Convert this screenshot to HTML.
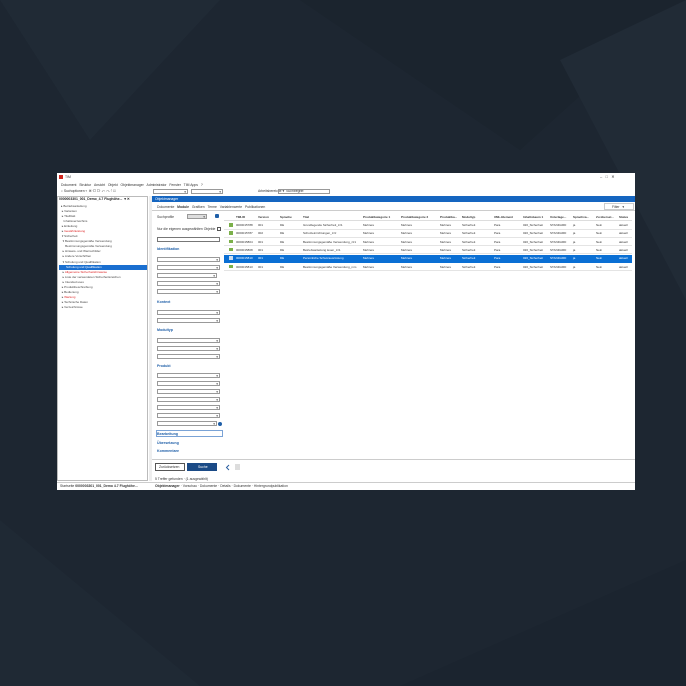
<!DOCTYPE html>
<html><head><meta charset="utf-8"><style>
*{margin:0;padding:0;box-sizing:border-box}
body{width:686px;height:686px;overflow:hidden;background:#1d2631;font-family:"Liberation Sans",sans-serif;position:relative}
.a{position:absolute}
.t{position:absolute;font-size:3.4px;color:#333;white-space:nowrap;line-height:4px}
.f{position:absolute;height:5px;border:0.5px solid #999;background:#fff}
.f::after{content:"▾";position:absolute;right:1px;top:-0.5px;font-size:3.5px;color:#555;line-height:5px}
.h{position:absolute;font-size:3.6px;color:#1f5fa8;font-weight:bold;white-space:nowrap}
</style></head><body>
<svg class="a" style="left:0;top:0" width="686" height="686">
<polygon points="0,0 220,0 90,140" fill="#202a35"/>
<polygon points="300,0 686,0 520,150" fill="#1b242e"/>
<polygon points="0,520 200,686 0,686" fill="#1f2934"/>
<polygon points="400,686 686,560 686,686" fill="#1b242f"/>
<polygon points="560,60 686,0 686,300" fill="#212b36"/>
</svg>
<div class="a" style="left:57px;top:173px;width:578px;height:317px;background:#fff"></div>
<div class="a" style="left:59px;top:175px;width:4px;height:4px;background:#d0261e"></div>
<div class="t" style="left:65px;top:175px">TIM</div>
<div class="t" style="left:600px;top:175px;font-size:4px">–&nbsp;&nbsp;&nbsp;□&nbsp;&nbsp;&nbsp;✕</div>
<div class="t" style="left:61px;top:183px">Dokument&nbsp;&nbsp;&nbsp;Struktur&nbsp;&nbsp;&nbsp;Ansicht&nbsp;&nbsp;&nbsp;Objekt&nbsp;&nbsp;&nbsp;Objektmanager&nbsp;&nbsp;&nbsp;Administrator&nbsp;&nbsp;&nbsp;Fenster&nbsp;&nbsp;&nbsp;TIM Apps&nbsp;&nbsp;&nbsp;?</div>
<div class="t" style="left:61px;top:189px">⌕ Suchoptionen ▾ &nbsp;▣ ⟲ ⟳ ↶ ↷ ⇡ ▤</div>
<div class="f" style="left:153px;top:189px;width:35px"></div>
<div class="f" style="left:191px;top:189px;width:32px"></div>
<div class="t" style="left:258px;top:189px">Arbeitsbereiche ▾ &nbsp;Suchbegriff:</div>
<div class="a" style="left:278px;top:189px;width:52px;height:5px;border:0.5px solid #999"></div>
<div class="a" style="left:57px;top:196px;width:91px;height:285px;border:0.5px solid #bbb"></div>
<div class="t" style="left:59px;top:197px;font-weight:bold;color:#222">0000003301_001_Demo_4.7 Flughöhe...&nbsp;&nbsp;▾ ✕</div>
<div class="a" style="left:59px;top:265px;width:88px;height:5px;background:#1a6fd0"></div>
<div class="t" style="left:61px;top:204px;font-size:3px;line-height:5.05px;color:#444">
▸ Betriebsanleitung<br>&nbsp;▸ Varianten<br>&nbsp;▸ Titelblatt<br>&nbsp;&nbsp;&nbsp;Inhaltsverzeichnis<br>&nbsp;▸ Einleitung<br>&nbsp;▸ <span style="color:#d22">Gewährleistung</span><br>&nbsp;▾ Sicherheit<br>&nbsp;&nbsp;▾ Bestimmungsgemäße Verwendung<br>&nbsp;&nbsp;&nbsp;&nbsp;&nbsp;Bestimmungsgemäße Verwendung<br>&nbsp;&nbsp;▸ Hinweis- und Warnschilder<br>&nbsp;&nbsp;▸ Andere Vorschriften<br>&nbsp;&nbsp;▾ Schulung und Qualifikation<br><span style="color:#fff">&nbsp;&nbsp;&nbsp;&nbsp;&nbsp;&nbsp;Schulung und Qualifikation</span><br>&nbsp;&nbsp;▸ <span style="color:#d22">Allgemeine Sicherheitshinweise</span><br>&nbsp;&nbsp;▸ Liste der verwendeten Sicherheitszeichen<br>&nbsp;&nbsp;▸ Intended uses<br>&nbsp;▸ Produktbeschreibung<br>&nbsp;▸ Bedienung<br>&nbsp;▸ <span style="color:#d22">Wartung</span><br>&nbsp;▸ Technische Daten<br>&nbsp;▸ Verzeichnisse</div>
<div class="a" style="left:149px;top:196px;width:3px;height:285px;background:#eee"></div>
<div class="a" style="left:152px;top:196px;width:483px;height:6px;background:#1565c0"></div>
<div class="t" style="left:155px;top:197px;color:#fff">Objektmanager</div>
<div class="t" style="left:157px;top:205px">Dokumente&nbsp;&nbsp;&nbsp;<b>Module</b>&nbsp;&nbsp;&nbsp;Grafiken&nbsp;&nbsp;&nbsp;Terme&nbsp;&nbsp;&nbsp;Variablenwerte&nbsp;&nbsp;&nbsp;Publikationen</div>
<div class="a" style="left:152px;top:210px;width:483px;height:0.5px;background:#ccc"></div>
<div class="a" style="left:604px;top:203px;width:30px;height:7px;border:0.5px solid #ccc"></div>
<div class="t" style="left:612px;top:205px">Filter&nbsp;&nbsp;&nbsp;▾</div>
<div class="t" style="left:157px;top:215px">Suchprofile</div>
<div class="f" style="left:187px;top:214px;width:20px;background:#ddd"></div>
<div class="a" style="left:215px;top:214px;width:4px;height:4px;background:#1f5fa8;border-radius:1px"></div>
<div class="t" style="left:157px;top:227px">Nur die eigenen ausgewählten Objekte</div>
<div class="a" style="left:217px;top:227px;width:4px;height:4px;border:0.5px solid #555"></div>
<div class="a" style="left:157px;top:237px;width:63px;height:5px;border:0.5px solid #777"></div>
<div class="h" style="left:157px;top:247px">Identifikation</div>
<div class="f" style="left:157px;top:257px;width:63px"></div>
<div class="f" style="left:157px;top:265px;width:63px"></div>
<div class="f" style="left:157px;top:273px;width:60px"></div>
<div class="f" style="left:157px;top:281px;width:63px"></div>
<div class="f" style="left:157px;top:289px;width:63px"></div>
<div class="h" style="left:157px;top:300px">Kontext</div>
<div class="f" style="left:157px;top:310px;width:63px"></div>
<div class="f" style="left:157px;top:318px;width:63px"></div>
<div class="h" style="left:157px;top:328px">Modultyp</div>
<div class="f" style="left:157px;top:338px;width:63px"></div>
<div class="f" style="left:157px;top:346px;width:63px"></div>
<div class="f" style="left:157px;top:354px;width:63px"></div>
<div class="h" style="left:157px;top:364px">Produkt</div>
<div class="f" style="left:157px;top:373px;width:63px"></div>
<div class="f" style="left:157px;top:381px;width:63px"></div>
<div class="f" style="left:157px;top:389px;width:63px"></div>
<div class="f" style="left:157px;top:397px;width:63px"></div>
<div class="f" style="left:157px;top:405px;width:63px"></div>
<div class="f" style="left:157px;top:413px;width:63px"></div>
<div class="f" style="left:157px;top:421px;width:60px"></div>
<div class="a" style="left:218px;top:422px;width:4px;height:4px;background:#1f5fa8;border-radius:2px"></div>
<div class="a" style="left:156px;top:430px;width:67px;height:7px;border:0.5px solid #7aa3d6"></div>
<div class="h" style="left:157px;top:432px">Bearbeitung</div>
<div class="h" style="left:157px;top:441px">Übersetzung</div>
<div class="h" style="left:157px;top:449px">Kommentare</div>
<div class="a" style="left:152px;top:459px;width:483px;height:0.5px;background:#ccc"></div>
<div class="a" style="left:155px;top:463px;width:30px;height:8px;border:0.5px solid #555"></div>
<div class="t" style="left:159px;top:465px">Zurücksetzen</div>
<div class="a" style="left:187px;top:463px;width:30px;height:8px;background:#1a4a86"></div>
<div class="t" style="left:198px;top:465px;color:#fff">Suche</div>
<svg class="a" style="left:225px;top:464px" width="6" height="7"><path d="M4 1 L1.5 3.5 L4 6" stroke="#2a5ea0" stroke-width="1" fill="none"/></svg>
<div class="a" style="left:235px;top:464px;width:5px;height:6px;background:#ddd"></div>
<div class="t" style="left:155px;top:477px">5 Treffer gefunden · (1 ausgewählt)</div>
<div class="a" style="left:57px;top:482px;width:578px;height:0.5px;background:#ccc"></div>
<div class="t" style="left:60px;top:484px">Startseite <b>0000003301_001_Demo 4.7 Flughöhe...</b></div>
<div class="t" style="left:155px;top:484px"><b>Objektmanager</b> · Vorschau · Dokumente · Details · Dokumente · Hintergrundpublikation</div>
<div class="t" style="left:226px;top:215px;font-weight:bold;font-size:3px">
<span style="position:absolute;left:10px">TIM-ID</span><span style="position:absolute;left:32px">Version</span><span style="position:absolute;left:54px">Sprache</span><span style="position:absolute;left:77px">Titel</span><span style="position:absolute;left:137px">Produktkategorie 1</span><span style="position:absolute;left:175px">Produktkategorie 2</span><span style="position:absolute;left:214px">Produktka...</span><span style="position:absolute;left:236px">Modultyp</span><span style="position:absolute;left:268px">XML-Element</span><span style="position:absolute;left:297px">Inhaltsbaum 1</span><span style="position:absolute;left:324px">Unterlage...</span><span style="position:absolute;left:347px">Sprachva...</span><span style="position:absolute;left:370px">Zu überset...</span><span style="position:absolute;left:393px">Status</span></div>
<div class="a" style="left:224px;top:220px;width:408px;height:0.5px;background:#ddd"></div>
<div class="a" style="left:224px;top:255px;width:408px;height:8px;background:#0a6fd4"></div>
<div id="rows"></div>
<script>
var ids=["0000015788","0000015787","0000015804","0000015808","0000015810","0000015813"],
ver=["001","002","001","001","001","001"],
ti=["Grundlegende Sicherheit_zz1","Schutzeinrichtungen_zzz","Bestimmungsgemäße Verwendung_zz1","Betriebsanleitung lesen_zz1","Persönliche Schutzausrüstung","Bestimmungsgemäße Verwendung_mm"],h="";
for(var i=0;i<6;i++){var y=223+i*8.3,c=i==4?"#fff":"#333";
h+='<div class="a" style="left:229px;top:'+y+'px;width:4px;height:3.5px;background:'+(i==4?'#cde':'#7bb04a')+'"></div>';
h+='<div class="t" style="top:'+y+'px;left:226px;font-size:3px;color:'+c+'">'+
[[10,ids[i]],[32,ver[i]],[54,"DE"],[77,ti[i]],[137,"Mehrere"],[175,"Mehrere"],[214,"Mehrere"],[236,"Sicherheit"],[268,"Para"],[297,"020_Sicherheit"],[324,"STANDARD"],[347,"ja"],[370,"Nein"],[393,"aktuell"]].map(function(p){return '<span style="position:absolute;left:'+p[0]+'px">'+p[1]+'</span>'}).join("")+'</div>';
if(i!=4)h+='<div class="a" style="left:224px;top:'+(y+5.5)+'px;width:408px;height:0.4px;background:#e4e4e4"></div>';}
document.getElementById("rows").innerHTML=h;
</script>
</body></html>
